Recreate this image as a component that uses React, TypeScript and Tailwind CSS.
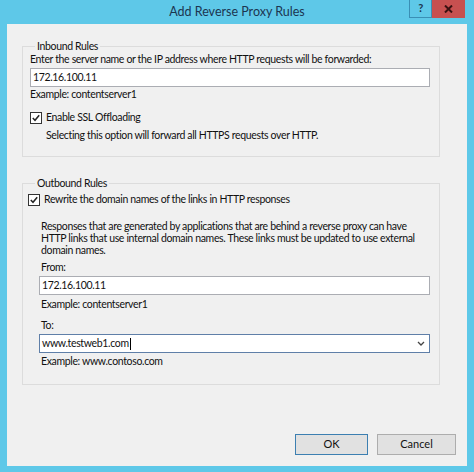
import { useState } from "react";

function CheckBox({ checked }: { checked: boolean }) {
  return (
    <span className="w-[12px] h-[12px] border border-[#333333] bg-white flex items-center justify-center shrink-0">
      {checked && (
        <svg width="8" height="8" viewBox="0 0 8 8">
          <path d="M0.8 4 L3 6.3 L7.2 1.2" fill="none" stroke="#222222" strokeWidth="1.5" />
        </svg>
      )}
    </span>
  );
}

function TextBox({ value }: { value: string }) {
  return (
    <div className="h-[19px] bg-white border border-[#abadb3] px-[2px] flex items-center text-[#111]">
      {value}
    </div>
  );
}

export default function App() {
  const [ssl] = useState(true);
  const [rewrite] = useState(true);

  return (
    <div
      className="w-[474px] h-[472px] bg-[#5ec8e8] flex flex-col text-[10.5px] tracking-[-0.35px] text-[#111111]"
      style={{ fontFamily: 'Lato, "Open Sans", sans-serif' }}
    >
      <div className="relative h-[24px] flex items-center justify-center">
        <span className="text-[12.5px] tracking-normal text-[#1c3550] pt-[1px]">Add Reverse Proxy Rules</span>
        <div className="absolute top-0 right-[9px] flex h-[18px]">
          <div className="w-[23px] border border-[#3a8fb5] border-t-0 bg-[#5ec8e8] flex items-center justify-center text-[11px] font-bold text-[#1c3550]">
            ?
          </div>
          <div className="w-[33px] bg-[#c75050] flex items-center justify-center">
            <svg width="9" height="8" viewBox="0 0 9 8">
              <path d="M1 0.5 L8 7.5 M8 0.5 L1 7.5" stroke="#3a1010" strokeWidth="2" />
            </svg>
          </div>
        </div>
      </div>

      <div className="flex-1 mx-[7px] mb-[6px] bg-[#f0f0f0] flex flex-col pl-[15px] pr-[27px]">
        <fieldset className="min-w-0 mt-[15px] border border-[#dcdcdc] h-[118px] pl-[7px] pr-[9px]">
          <legend className="ml-[5px] px-[2px] leading-[14px]">Inbound Rules</legend>
          <div className="leading-[13px]">
            Enter the server name or the IP address where HTTP requests will be forwarded:
          </div>
          <div className="mt-[2px]">
            <TextBox value="172.16.100.11" />
          </div>
          <div className="leading-[13px] mt-[1px]">Example: contentserver1</div>
          <div className="flex items-center gap-[4px] mt-[10px] h-[13px]">
            <CheckBox checked={ssl} />
            <span>Enable SSL Offloading</span>
          </div>
          <div className="leading-[13px] mt-[5px] pl-[16px]">
            Selecting this option will forward all HTTPS requests over HTTP.
          </div>
        </fieldset>

        <fieldset className="min-w-0 mt-[19px] border border-[#dcdcdc] h-[209px] pl-[7px] pr-[9px]">
          <legend className="ml-[5px] px-[2px] leading-[14px]">Outbound Rules</legend>
          <div className="flex items-center gap-[4px] mt-[3px] h-[13px] ml-[-2px]">
            <CheckBox checked={rewrite} />
            <span>Rewrite the domain names of the links in HTTP responses</span>
          </div>
          <div className="pl-[9px] mt-[14px]">
            <div className="leading-[12px] px-[2px]">
              Responses that are generated by applications that are behind a reverse proxy can have
              <br />
              HTTP links that use internal domain names. These links must be updated to use external
              <br />
              domain names.
            </div>
            <div className="leading-[13px] mt-[5px] px-[2px]">From:</div>
            <div className="mt-[2px]">
              <TextBox value="172.16.100.11" />
            </div>
            <div className="leading-[13px] mt-[3px] px-[2px]">Example: contentserver1</div>
            <div className="leading-[13px] mt-[8px] px-[2px]">To:</div>
            <div className="mt-[2px] h-[19px] bg-white border border-[#5f7fa8] pl-[2px] pr-[4px] flex items-center justify-between text-[#111]">
              <span className="flex items-center">
                www.testweb1.com
                <span className="w-px h-[12px] bg-black ml-[1px]" />
              </span>
              <svg width="8" height="5" viewBox="0 0 8 5">
                <path d="M1 1 L4 4 L7 1" fill="none" stroke="#444" strokeWidth="1.3" />
              </svg>
            </div>
            <div className="leading-[13px] mt-[2px] px-[2px]">Example: www.contoso.com</div>
          </div>
        </fieldset>

        <div className="flex-1" />
        <div className="flex justify-end gap-[9px] mb-[11px] mr-[-16px]">
          <button className="w-[73px] h-[21px] bg-[#e1e1e1] border border-[#3c7fb1] text-[#111] text-[11px] tracking-normal">
            OK
          </button>
          <button className="w-[79px] h-[21px] bg-[#e1e1e1] border border-[#adadad] text-[#111] text-[11px] tracking-normal">
            Cancel
          </button>
        </div>
      </div>
    </div>
  );
}
